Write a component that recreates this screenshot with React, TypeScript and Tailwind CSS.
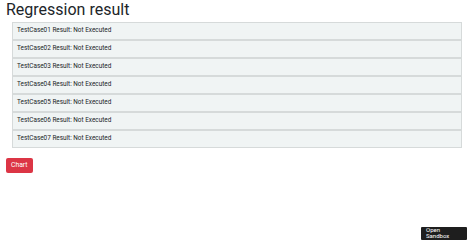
import React from "react";

const cases = ["TestCase01", "TestCase02", "TestCase03", "TestCase04", "TestCase05", "TestCase06", "TestCase07"];

export default function App() {
  return (
    <div className="relative w-[474px] h-[248px] bg-white px-[6px]" style={{ fontFamily: "Roboto, 'Liberation Sans', sans-serif" }}>
      <h1 className="text-[16px] leading-[20px] mb-[2px] font-normal text-[#212529]">Regression result</h1>
      <div className="mx-[6px] flex flex-col">
        {cases.map((c) => (
          <div key={c} className="h-[18px] border border-[#d6dada] bg-[#f0f4f4] pl-[4px] flex items-center text-[6.4px] font-normal text-[#212529]">
            {c} Result: Not Executed
          </div>
        ))}
      </div>
      <button className="mt-[10px] h-[15px] px-[5px] rounded-[2px] bg-[#dc3545] text-white text-[6.8px] font-normal leading-[15px]">Chart</button>
      <div className="absolute left-[421px] top-[227px] w-[46px] h-[13px] bg-[#1e1e1e] rounded-[1px] text-white pl-[5px]">
        <div className="w-[20px] text-[6px] leading-[6px]">Open Sandbox</div>
      </div>
    </div>
  );
}
